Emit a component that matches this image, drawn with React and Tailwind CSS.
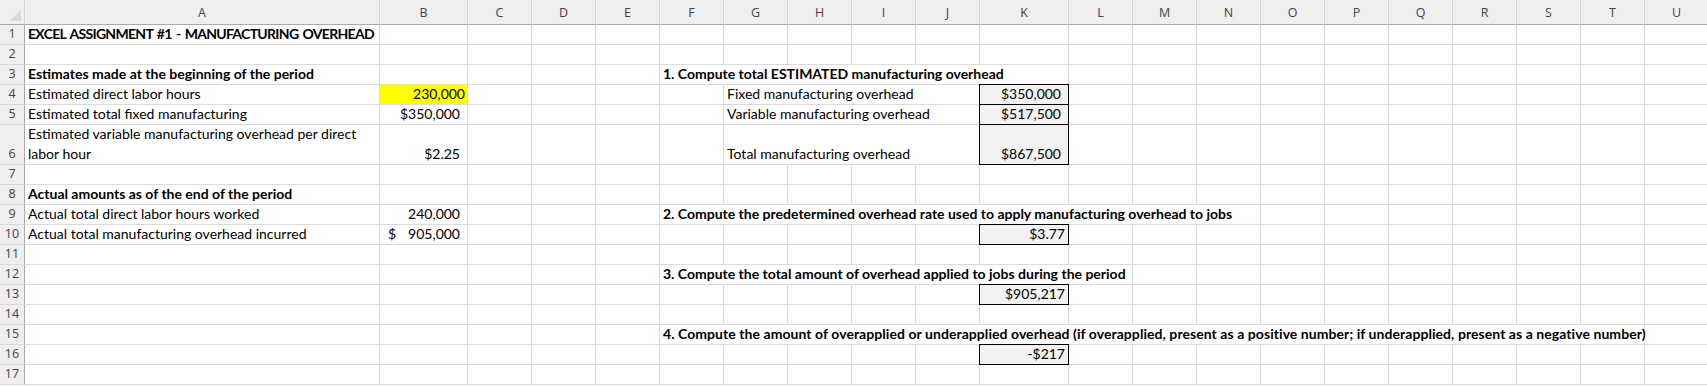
const COLS = 'ABCDEFGHIJKLMNOPQRSTU'.split('');

const SPAN = {
  4: 'col-span-4',
  6: 'col-span-6',
  7: 'col-span-7',
  9: 'col-span-9',
  15: 'col-span-15',
};

const rows = [
  {
    n: 1,
    cells: [
      {
        c: 0,
        t: 'EXCEL ASSIGNMENT #1 - MANUFACTURING OVERHEAD',
        b: true,
        tr: 'tracking-[-0.7px] [word-spacing:1.5px]',
      },
    ],
  },
  { n: 2 },
  {
    n: 3,
    cells: [
      { c: 0, t: 'Estimates made at the beginning of the period', b: true },
      { c: 5, span: 6, t: '1. Compute total ESTIMATED manufacturing overhead', b: true },
    ],
  },
  {
    n: 4,
    cells: [
      { c: 0, t: 'Estimated direct labor hours' },
      { c: 1, t: '230,000', pr: 'pr-[2px]', yellow: true },
      { c: 6, span: 4, t: 'Fixed manufacturing overhead' },
      { c: 10, t: '$350,000', box: 'top', pr: 'pr-[7px]' },
    ],
  },
  {
    n: 5,
    cells: [
      { c: 0, t: 'Estimated total fixed manufacturing' },
      { c: 1, t: '$350,000', pr: 'pr-[7px]' },
      { c: 6, span: 4, t: 'Variable manufacturing overhead' },
      { c: 10, t: '$517,500', box: 'mid', pr: 'pr-[7px]' },
    ],
  },
  {
    n: 6,
    cells: [
      {
        c: 0,
        t: (
          <>
            Estimated variable manufacturing overhead per direct
            <br />
            labor hour
          </>
        ),
        wrap: true,
      },
      { c: 1, t: '$2.25', pr: 'pr-[7px]' },
      { c: 6, span: 4, t: 'Total manufacturing overhead' },
      { c: 10, t: '$867,500', box: 'mid', pr: 'pr-[7px]' },
    ],
  },
  { n: 7 },
  { n: 8, cells: [{ c: 0, t: 'Actual amounts as of the end of the period', b: true }] },
  {
    n: 9,
    cells: [
      { c: 0, t: 'Actual total direct labor hours worked' },
      { c: 1, t: '240,000', pr: 'pr-[7px]' },
      {
        c: 5,
        span: 9,
        t: '2. Compute the predetermined overhead rate used to apply manufacturing overhead to jobs',
        b: true,
      },
    ],
  },
  {
    n: 10,
    cells: [
      { c: 0, t: 'Actual total manufacturing overhead incurred' },
      { c: 1, acct: ['$', '905,000'] },
      { c: 10, t: '$3.77', box: 'top', pr: 'pr-[3px]' },
    ],
  },
  { n: 11 },
  {
    n: 12,
    cells: [{ c: 5, span: 7, t: '3. Compute the total amount of overhead applied to jobs during the period', b: true }],
  },
  { n: 13, cells: [{ c: 10, t: '$905,217', box: 'top', pr: 'pr-[3px]' }] },
  { n: 14 },
  {
    n: 15,
    cells: [
      {
        c: 5,
        span: 15,
        t: '4. Compute the amount of overapplied or underapplied overhead (if overapplied, present as a positive number; if underapplied, present as a negative number)',
        b: true,
        tr: 'tracking-[0.06px]',
      },
    ],
  },
  { n: 16, cells: [{ c: 10, t: '-$217', box: 'top', pr: 'pr-[3px]' }] },
  { n: 17 },
];

function Cell({ cell }) {
  const base = 'flex items-end whitespace-nowrap leading-[20px] text-[14px] text-black';
  if (!cell) return <div className="border-r border-b border-[#dadada]" />;

  if (cell.acct) {
    return (
      <div className={`${base} justify-between border-r border-b border-[#dadada] pl-[8px] pr-[7px]`}>
        <span>{cell.acct[0]}</span>
        <span>{cell.acct[1]}</span>
      </div>
    );
  }

  if (cell.box) {
    return (
      <div
        className={`${base} justify-end -ml-px border-l border-r border-b border-black bg-[#f2f2f2] ${
          cell.box === 'top' ? '-mt-px border-t' : ''
        } ${cell.pr}`}
      >
        {cell.t}
      </div>
    );
  }

  const align = cell.pr ? `justify-end ${cell.pr}` : 'pl-[3px]';
  return (
    <div
      className={`${base} ${align} ${SPAN[cell.span] || ''} ${cell.b ? 'font-bold' : ''} ${cell.tr || ''} ${
        cell.yellow ? 'bg-[#ffff00]' : ''
      } border-r border-b border-[#dadada]`}
    >
      <span className={cell.wrap ? 'block' : ''}>{cell.t}</span>
    </div>
  );
}

function SheetRow({ row }) {
  const out = [];
  const byCol = {};
  (row.cells || []).forEach((c) => (byCol[c.c] = c));
  for (let c = 0; c < COLS.length; c++) {
    const cell = byCol[c];
    out.push(<Cell key={c} cell={cell} />);
    if (cell && cell.span) c += cell.span - 1;
  }
  return (
    <>
      <div className="flex items-end justify-center border-r border-b border-r-[#ababab] border-b-[#dadada] bg-[#efefef] pb-[1px] leading-[18px] text-[12.5px] text-[#444] [font-family:'Open_Sans','Noto_Sans',sans-serif]">
        {row.n}
      </div>
      {out}
    </>
  );
}

export default function App() {
  return (
    <div className="h-[386px] w-[1707px] overflow-hidden bg-white [font-family:Lato,'Liberation_Sans',sans-serif]">
      <div className="grid grid-cols-[25px_355px_88px_repeat(8,64px)_89px_repeat(10,64px)] grid-rows-[25px_repeat(5,20px)_40px_repeat(11,20px)]">
        <div className="relative border-r border-b border-r-[#d5d5d5] border-b-[#ababab] bg-[#efefef]">
          <svg className="absolute right-[3px] bottom-[3px]" width="11" height="11" viewBox="0 0 11 11">
            <polygon points="11,0 11,11 0,11" fill="#d9d9d9" />
          </svg>
        </div>
        {COLS.map((l) => (
          <div
            key={l}
            className="flex items-center justify-center border-r border-b border-r-[#d5d5d5] border-b-[#ababab] bg-[#efefef] pt-[2px] text-[12.5px] text-[#444] [font-family:'Open_Sans','Noto_Sans',sans-serif]"
          >
            {l}
          </div>
        ))}
        {rows.map((r) => (
          <SheetRow key={r.n} row={r} />
        ))}
      </div>
    </div>
  );
}
